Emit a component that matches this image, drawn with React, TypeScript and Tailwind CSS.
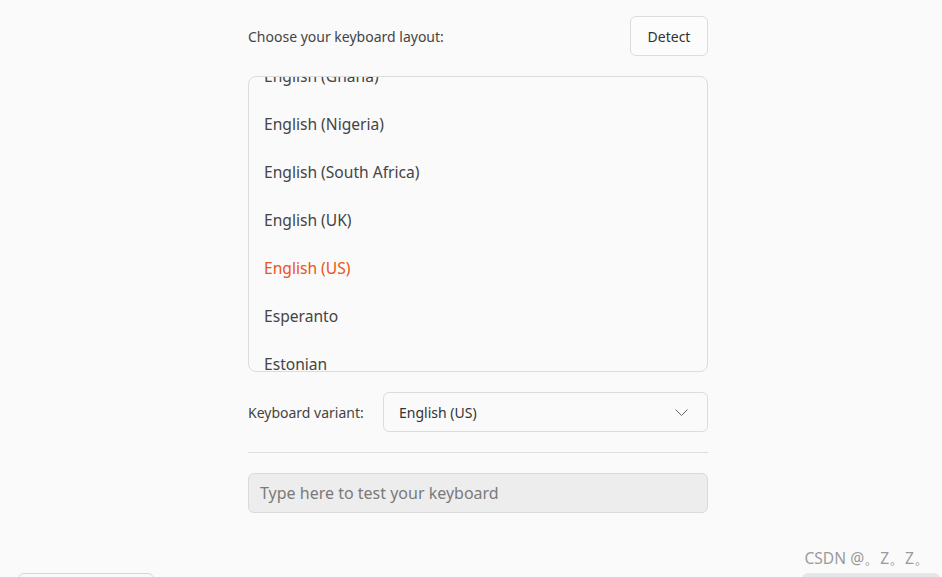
import React from 'react';

const layouts = [
    'English (Ghana)',
    'English (Nigeria)',
    'English (South Africa)',
    'English (UK)',
    'English (US)',
    'Esperanto',
    'Estonian',
];

const selected = 'English (US)';

const LayoutList: React.FC = () => (
    <div className="mt-5 h-[296px] rounded-lg border border-[#dcdcdc] overflow-hidden">
        <div className="-mt-[24px]">
            {layouts.map((name) => (
                <div
                    key={name}
                    className={`h-12 flex items-center pl-[15px] text-[15.6px] ${
                        name === selected ? 'text-[#e95420]' : 'text-[#444]'
                    }`}
                >
                    {name}
                </div>
            ))}
        </div>
    </div>
);

const App: React.FC = () => {
    return (
        <div
            className="relative w-full h-[577px] overflow-hidden bg-[#fafafa] flex flex-col"
            style={{ fontFamily: '"Noto Sans", "Open Sans", sans-serif' }}
        >
            <div className="ml-[248px] w-[460px] pt-4">
                <div className="h-10 flex items-center justify-between">
                    <span className="text-[14px] text-[#444]">Choose your keyboard layout:</span>
                    <button className="h-10 w-[78px] rounded-md border border-[#dcdcdc] bg-[#fcfcfc] text-[14px] text-[#333]">
                        Detect
                    </button>
                </div>

                <LayoutList />

                <div className="mt-5 h-10 flex items-center">
                    <span className="w-[135px] text-[14px] text-[#444]">Keyboard variant:</span>
                    <div className="flex-1 h-10 rounded-md border border-[#dcdcdc] flex items-center justify-between pl-[15px] pr-[19px]">
                        <span className="text-[14px] text-[#333]">English (US)</span>
                        <svg width="13" height="7" viewBox="0 0 13 7" fill="none">
                            <path d="M0.5 0.5l6 6 6-6" stroke="#666" strokeWidth="1" />
                        </svg>
                    </div>
                </div>

                <div className="mt-5 h-px bg-[#dedede]" />

                <div className="mt-5 h-10 rounded-md border border-[#dadada] bg-[#ededed] flex items-center pl-[11px]">
                    <span className="text-[16px] text-[#7a7a7a]">Type here to test your keyboard</span>
                </div>
            </div>

            <div className="mt-[60px] flex justify-between pl-[18px] pr-[2px]">
                <div className="w-[136px] h-10 rounded-md border border-[#d6d6d6] bg-[#fafafa]" />
                <div className="w-[138px] h-10 rounded-md bg-[#e6e6e6]" />
            </div>

            <span className="absolute right-[12px] bottom-[7px] text-[15.6px] text-[#9a9a9a]">
                CSDN @。Z。Z。
            </span>
        </div>
    );
};

export default App;
